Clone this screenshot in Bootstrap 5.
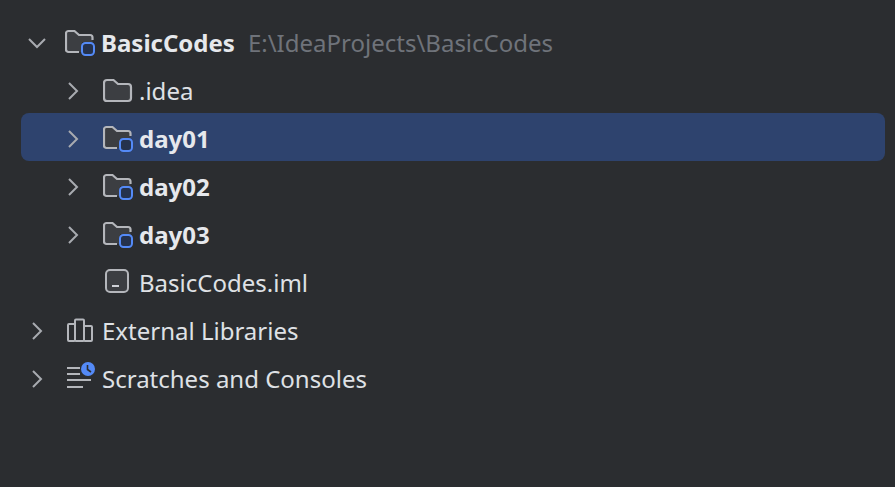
<!DOCTYPE html>
<html lang="en">
<head>
    <meta charset="UTF-8">
    <title>Project tree</title>
    <link href="https://cdn.jsdelivr.net/npm/bootstrap@5.3.0/dist/css/bootstrap.min.css" rel="stylesheet">
    <style>
        body {
            background-color: #2b2d30;
            color: #dfe1e5;
            font-family: "Noto Sans", "Open Sans", sans-serif;
            font-size: 24px;
            overflow: hidden;
        }
        .tree-list {
            padding: 17px 10px 0 21px;
        }
        .tree-row {
            height: 48px;
            padding-top: 4px;
            border-radius: 8px;
            white-space: nowrap;
            line-height: 40px;
        }
        .tree-row.selected {
            background-color: #2e436e;
        }
        .slot-arrow {
            width: 32px;
            flex: none;
        }
        .tree-child .slot-arrow { margin-left: 36px; }
        .slot-icon {
            width: 36px;
            margin-left: 12px;
            flex: none;
        }
        .tree-child .slot-icon { margin-left: 14px; }
        .tree-lib .slot-icon { margin-left: 13px; }
        .tree-file { padding-left: 84px; }
        .tree-file .slot-icon { width: 34px; margin-left: 0; }
        .row-name { font-weight: 700; color: #e6e8ec; }
        .row-path { color: #6f737a; margin-left: 13px; }
        .slot-arrow svg { margin: 0 auto; }
        svg { display: block; }
    </style>
</head>
<body>
    <svg width="0" height="0" class="position-absolute">
        <symbol id="i-closed" viewBox="0 0 20 20"><path d="M6 2l8 8-8 8" fill="none" stroke="#a8abb0" stroke-width="2"/></symbol>
        <symbol id="i-open" viewBox="0 0 20 20"><path d="M2 6l8 8 8-8" fill="none" stroke="#a8abb0" stroke-width="2"/></symbol>
        <symbol id="i-module" viewBox="0 0 32 32"><path d="M3.500 4H9.500L14 8H25A2.500 2.500 0 0 1 27.500 10.500V15H17V25H3.500A2.500 2.500 0 0 1 1 22.500V6.500A2.500 2.500 0 0 1 3.500 4Z" fill="#3c3e42"/><path d="M14 25H3.500A2.500 2.500 0 0 1 1 22.500V6.500A2.500 2.500 0 0 1 3.500 4H9.500L14 8H25A2.500 2.500 0 0 1 27.500 10.500V13" fill="none" stroke="#b4b6bb" stroke-width="2.200"/><rect x="17" y="16" width="12" height="12" rx="3.500" fill="#25324d" stroke="#548af7" stroke-width="2"/></symbol>
    </svg>
    <ul class="list-unstyled tree-list mb-0">
        <li class="tree-row d-flex align-items-center">
            <span class="slot-arrow"><svg width="20" height="20"><use href="#i-open"/></svg></span>
            <span class="slot-icon"><svg width="32" height="32"><use href="#i-module"/></svg></span>
            <span class="row-name">BasicCodes</span><span class="row-path">E:\IdeaProjects\BasicCodes</span>
        </li>
        <li class="tree-row tree-child d-flex align-items-center">
            <span class="slot-arrow"><svg width="20" height="20"><use href="#i-closed"/></svg></span>
            <span class="slot-icon"><svg width="30" height="26" viewBox="0 0 30 26" fill="none"><path d="M4 2H10.500L15 6H25A3 3 0 0 1 28 9V20A3 3 0 0 1 25 23H4A3 3 0 0 1 1 20V5A3 3 0 0 1 4 2Z" fill="#3c3e42" stroke="#b4b6bb" stroke-width="2.200"/></svg></span>
            <span>.idea</span>
        </li>
        <li class="tree-row tree-child selected d-flex align-items-center">
            <span class="slot-arrow"><svg width="20" height="20"><use href="#i-closed"/></svg></span>
            <span class="slot-icon"><svg width="32" height="32"><use href="#i-module"/></svg></span>
            <span class="row-name">day01</span>
        </li>
        <li class="tree-row tree-child d-flex align-items-center">
            <span class="slot-arrow"><svg width="20" height="20"><use href="#i-closed"/></svg></span>
            <span class="slot-icon"><svg width="32" height="32"><use href="#i-module"/></svg></span>
            <span class="row-name">day02</span>
        </li>
        <li class="tree-row tree-child d-flex align-items-center">
            <span class="slot-arrow"><svg width="20" height="20"><use href="#i-closed"/></svg></span>
            <span class="slot-icon"><svg width="32" height="32"><use href="#i-module"/></svg></span>
            <span class="row-name">day03</span>
        </li>
        <li class="tree-row tree-file d-flex align-items-center">
            <span class="slot-icon"><svg width="26" height="28" viewBox="0 0 26 28" fill="none"><rect x="1" y="1" width="22" height="22" rx="4" fill="#3c3e42" stroke="#b4b6bb" stroke-width="2"/><path d="M7 17H14" stroke="#ced0d6" stroke-width="2"/></svg></span>
            <span>BasicCodes.iml</span>
        </li>
        <li class="tree-row tree-lib d-flex align-items-center">
            <span class="slot-arrow"><svg width="20" height="20"><use href="#i-closed"/></svg></span>
            <span class="slot-icon"><svg width="28" height="26" viewBox="0 0 28 26" fill="none" stroke="#b4b6bb" stroke-width="2"><rect x="2" y="6" width="7" height="17" rx="1"/><rect x="9" y="1.500" width="9" height="21.500" rx="1"/><rect x="18" y="8" width="8" height="15" rx="1"/></svg></span>
            <span>External Libraries</span>
        </li>
        <li class="tree-row tree-lib d-flex align-items-center">
            <span class="slot-arrow"><svg width="20" height="20"><use href="#i-closed"/></svg></span>
            <span class="slot-icon"><svg width="30" height="34" viewBox="0 0 30 34" fill="none"><path d="M1 6H14M1 12H14M1 18H25M1 25H17" stroke="#b4b6bb" stroke-width="2"/><circle cx="22" cy="7" r="7" fill="#548af7"/><path d="M21.500 3V7.500L25 10" stroke="#2b2d30" stroke-width="1.600"/></svg></span>
            <span>Scratches and Consoles</span>
        </li>
    </ul>
    <script src="https://cdn.jsdelivr.net/npm/bootstrap@5.3.0/dist/js/bootstrap.bundle.min.js"></script>
</body>
</html>
